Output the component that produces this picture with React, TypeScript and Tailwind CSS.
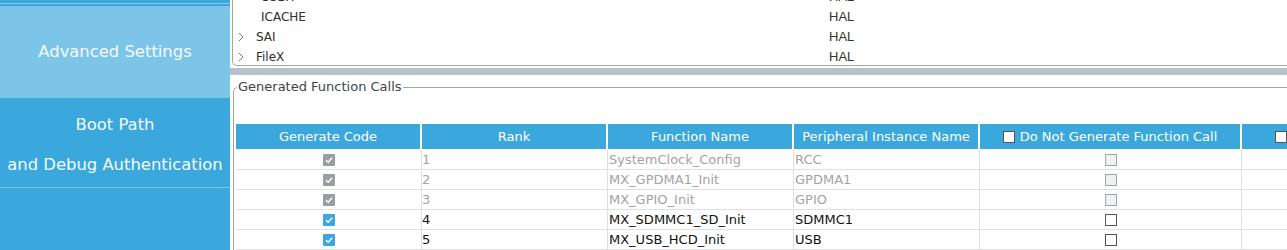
import React from "react";

type Row = {
  rank: number;
  fn: string;
  periph: string;
  enabled: boolean;
};

const rows: Row[] = [
  { rank: 1, fn: "SystemClock_Config", periph: "RCC", enabled: false },
  { rank: 2, fn: "MX_GPDMA1_Init", periph: "GPDMA1", enabled: false },
  { rank: 3, fn: "MX_GPIO_Init", periph: "GPIO", enabled: false },
  { rank: 4, fn: "MX_SDMMC1_SD_Init", periph: "SDMMC1", enabled: true },
  { rank: 5, fn: "MX_USB_HCD_Init", periph: "USB", enabled: true },
];

// first row is scrolled half out of view, like in the tool
const treeRows = [
  { name: "USBX", child: true, value: "HAL" },
  { name: "ICACHE", child: true, value: "HAL" },
  { name: "SAI", child: false, value: "HAL" },
  { name: "FileX", child: false, value: "HAL" },
];

function Chevron() {
  return (
    <svg width="6" height="10" viewBox="0 0 6 10" className="shrink-0">
      <path d="M1 1 L5 5 L1 9" fill="none" stroke="#7a7a7a" strokeWidth="1" />
    </svg>
  );
}

function CheckedBox({ enabled }: { enabled: boolean }) {
  return (
    <span
      className={
        enabled
          ? "w-[12px] h-[12px] rounded-[1px] bg-[#3aa8dc] flex items-center justify-center"
          : "w-[12px] h-[12px] rounded-[1px] bg-[#9a9da1] flex items-center justify-center"
      }
    >
      <svg width="10" height="10" viewBox="0 0 10 10">
        <path
          d="M2 5.2 L4.2 7.3 L8.2 2.8"
          fill="none"
          stroke="#ffffff"
          strokeWidth="1.4"
        />
      </svg>
    </span>
  );
}

function EmptyBox({ enabled }: { enabled: boolean }) {
  return (
    <span
      className={
        enabled
          ? "w-[12px] h-[12px] bg-white border border-[#555555]"
          : "w-[12px] h-[12px] bg-[#eff0f2] border border-[#a2a5a9]"
      }
    />
  );
}

export default function App() {
  return (
    <div className="flex w-[1287px] h-[250px] overflow-hidden bg-white font-['DejaVu_Sans',sans-serif]">
      {/* left navigation */}
      <aside className="w-[230px] shrink-0 bg-[#3aa8dc] flex flex-col text-[#f4faff]">
        <div className="h-[3px]" />
        <div className="h-px bg-[#86ccee]" />
        <div className="h-[2px]" />
        <div className="h-[92px] bg-[#7dc5e8] flex items-center justify-center text-[16.4px]">
          Advanced Settings
        </div>
        <div className="h-[89px] flex flex-col items-center justify-center gap-[16px] text-[16.4px] leading-[24px] pt-[4px]">
          <span>Boot Path</span>
          <span>and Debug Authentication</span>
        </div>
        <div className="h-px bg-[#7ec6e9]" />
      </aside>

      <main className="flex-1 min-w-0 flex flex-col">
        {/* top tree panel */}
        <div className="ml-[2px] h-[70px] border-l border-b border-[#a3a3a3] rounded-bl-[5px] overflow-hidden">
          <div className="mt-[-13px] flex flex-col">
            {treeRows.map((r) => (
              <div key={r.name} className="h-[20px] flex items-center text-[12px] text-[#2e2e2e]">
                <div className="w-[23px] pl-[5px] shrink-0 flex items-center">
                  {!r.child && <Chevron />}
                </div>
                <div className={r.child ? "w-[573px] pl-[5px] shrink-0" : "w-[573px] shrink-0"}>
                  {r.name}
                </div>
                <div className="font-['Liberation_Sans',sans-serif] text-[13px] text-[#333333]">
                  {r.value}
                </div>
              </div>
            ))}
          </div>
        </div>
        <div className="h-[2px]" />
        <div className="h-[8px] bg-[#b8c3c9]" />

        {/* generated function calls */}
        <fieldset className="ml-[3px] mt-[4px] flex-1 border-l border-t border-[#a3a3a3] rounded-tl-[5px]">
          <legend className="ml-[3px] px-[1px] text-[13px] leading-[16px] text-[#444444]">
            Generated Function Calls
          </legend>
          <div className="pl-[2px] mt-[29px] text-[13px]">
            <div className="flex h-[25px] text-white">
              <div className="w-[184px] mr-[2px] shrink-0 bg-[#3aa8dc] flex items-center justify-center">
                Generate Code
              </div>
              <div className="w-[184px] mr-[2px] shrink-0 bg-[#3aa8dc] flex items-center justify-center">
                Rank
              </div>
              <div className="w-[184px] mr-[2px] shrink-0 bg-[#3aa8dc] flex items-center justify-center">
                Function Name
              </div>
              <div className="w-[184px] mr-[2px] shrink-0 bg-[#3aa8dc] flex items-center justify-center">
                Peripheral Instance Name
              </div>
              <div className="w-[260px] mr-[2px] shrink-0 bg-[#3aa8dc] flex items-center justify-center gap-[5px]">
                <span className="w-[12px] h-[12px] bg-white border border-[#555555]" />
                Do Not Generate Function Call
              </div>
              <div className="w-[200px] shrink-0 bg-[#3aa8dc] flex items-center pl-[33px]">
                <span className="w-[12px] h-[12px] bg-white border border-[#555555]" />
              </div>
            </div>
            <div className="h-px" />
            {rows.map((r) => (
              <div
                key={r.rank}
                className={
                  r.enabled
                    ? "flex h-[20px] border-b border-[#e0e0e0] text-[#111111]"
                    : "flex h-[20px] border-b border-[#e0e0e0] text-[#a3a3a3]"
                }
              >
                <div className="w-[186px] shrink-0 border-r border-[#e0e0e0] flex items-center justify-center">
                  <CheckedBox enabled={r.enabled} />
                </div>
                <div className="w-[186px] shrink-0 border-r border-[#e0e0e0] flex items-center">
                  {r.rank}
                </div>
                <div className="w-[186px] shrink-0 border-r border-[#e0e0e0] flex items-center pl-[1px]">
                  {r.fn}
                </div>
                <div className="w-[186px] shrink-0 border-r border-[#e0e0e0] flex items-center pl-[1px]">
                  {r.periph}
                </div>
                <div className="w-[262px] shrink-0 border-r border-[#e0e0e0] flex items-center justify-center">
                  <EmptyBox enabled={r.enabled} />
                </div>
                <div className="flex-1" />
              </div>
            ))}
          </div>
        </fieldset>
      </main>
    </div>
  );
}
